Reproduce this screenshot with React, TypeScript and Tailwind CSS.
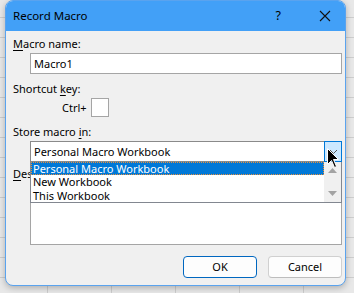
const font = { fontFamily: '"Noto Sans", "Liberation Sans", sans-serif' };

const Key = ({ children }: { children: string }) => <span className="underline underline-offset-2">{children}</span>;

export default function App() {
  return (
    <div
      className="w-[354px] h-[293px] overflow-hidden bg-[#e8e8e8] [background-image:linear-gradient(to_right,#cdcdcd_1px,transparent_1px),linear-gradient(to_bottom,#cdcdcd_1px,transparent_1px)] [background-size:64px_20px] [background-position:47px_17px] text-[11px] leading-[16px] text-black"
      style={font}
    >
      <div className="ml-[5px] w-[341px] h-[286px] rounded-lg border border-[#5aa3ee] bg-[#f0f0f0] flex flex-col overflow-hidden shadow-[0_2px_6px_rgba(0,0,0,0.25)]">
        {/* title bar */}
        <div className="h-[31px] -mt-px -mx-px bg-[#42a0f7] flex items-center shrink-0">
          <span className="pl-[8px] text-[11.5px]">Record Macro</span>
          <span className="ml-auto mr-[38px] text-[12.5px]">?</span>
          <svg width="12" height="12" viewBox="0 0 12 12" className="mr-[15px]">
            <path d="M1 1 L11 11 M11 1 L1 11" stroke="#111" strokeWidth="1.1" />
          </svg>
        </div>

        <div className="flex flex-col pl-[7px] pr-[3px]">
          <div className="mt-[5px]">
            <Key>M</Key>acro name:
          </div>
          <div className="mt-[1px] ml-[17px] h-[21px] bg-white border border-[#a5a5a5] flex items-center pl-[3px]">
            Macro1
          </div>

          <div className="mt-[7px]">
            Shortcut <Key>k</Key>ey:
          </div>
          <div className="mt-[1px] flex items-center">
            <span className="ml-[49px]">Ctrl+</span>
            <div className="ml-[4px] w-[18px] h-[19px] bg-white border border-[#a5a5a5]" />
          </div>

          <div className="mt-[7px]">
            Store macro <Key>i</Key>n:
          </div>
          <div className="mt-[1px] ml-[17px] relative">
            <div className="h-[21px] bg-white border border-[#8a8a8a] flex items-center pl-[3px]">
              Personal Macro Workbook
              <div className="ml-auto w-[18px] h-[21px] -mr-px bg-[#cce8ff] border border-[#0078d7] flex items-center justify-center">
                <svg width="9" height="6" viewBox="0 0 9 6">
                  <path d="M1 1 L4.5 4.5 L8 1" stroke="#555" strokeWidth="1" fill="none" />
                </svg>
              </div>
            </div>

            {/* dropdown list */}
            <div className="absolute left-0 right-0 top-full z-10 h-[41px] bg-white border border-t-0 border-[#828790] flex">
              <div className="flex-1 flex flex-col">
                <div className="h-[13px] leading-[13px] bg-[#0078d7] text-white pl-[2px] outline-1 outline-dotted outline-[#e8913c] -outline-offset-1">
                  Personal Macro Workbook
                </div>
                <div className="h-[14px] leading-[14px] pl-[2px]">New Workbook</div>
                <div className="h-[13px] leading-[13px] pl-[2px]">This Workbook</div>
              </div>
              <div className="w-[17px] bg-[#f0f0f0] flex flex-col items-center justify-between py-[6px]">
                <svg width="9" height="5" viewBox="0 0 9 5">
                  <path d="M0 5 L4.5 0 L9 5 Z" fill="#a3a3a3" />
                </svg>
                <svg width="9" height="5" viewBox="0 0 9 5">
                  <path d="M0 0 L4.5 5 L9 0 Z" fill="#a3a3a3" />
                </svg>
              </div>
            </div>

            {/* mouse cursor */}
            <svg width="13" height="21" viewBox="0 0 13 21" className="absolute z-20 left-[297px] top-[7px]">
              <path d="M0.5 0.5 L0.5 16.5 L4.5 12.5 L7.5 19.5 L9.5 18.5 L6.5 11.5 L11.5 11.5 Z" fill="#000" stroke="#fff" strokeWidth="1" />
            </svg>
          </div>

          <div className="mt-[4px]">
            <Key>D</Key>escription:
          </div>
          <div className="mt-[1px] ml-[17px] h-[62px] bg-white border border-[#a5a5a5]" />

          <div className="mt-[11px] flex justify-end gap-[11px]">
            <button className="w-[74px] h-[22px] rounded-[4px] bg-[#fdfdfd] border-[1.5px] border-[#0067c0]">OK</button>
            <button className="w-[74px] h-[22px] rounded-[4px] bg-[#fdfdfd] border border-[#d0d0d0] border-b-[#bdbdbd]">Cancel</button>
          </div>
        </div>
      </div>
    </div>
  );
}
